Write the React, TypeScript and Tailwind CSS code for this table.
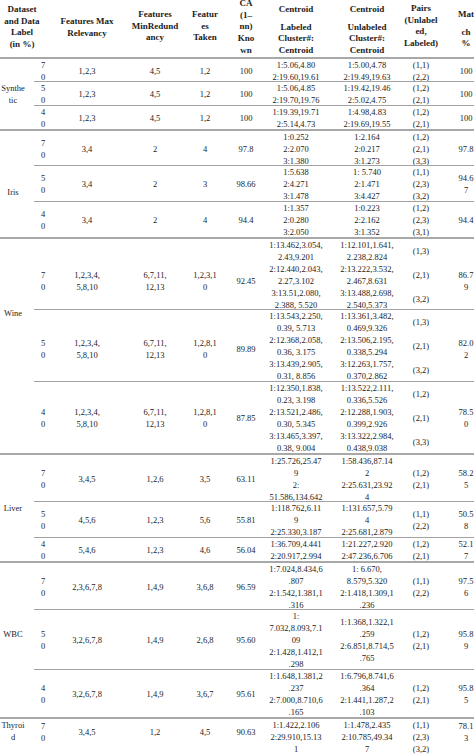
type Row = {
  label: string;
  fmr: string[];
  fmin: string[];
  taken: string[];
  ca: string[];
  cl: string[];
  cu: string[];
  pairs: string[];
  match: string[];
  lines: number;
  widePairs?: boolean;
  // nudges the short cells off the row's middle, as in the scan
  shift?: string;
};

type Group = {
  name: string[];
  nameClass: string;
  rows: Row[];
};

const rowHeight: Record<number, string> = {
  2: "h-[24px]",
  3: "h-[36px]",
  4: "h-[48px]",
  5: "h-[60px]",
  6: "h-[72px]",
};

const groups: Group[] = [
  {
    name: ["Synthe", "tic"],
    nameClass: "",
    rows: [
      {
        label: "70",
        fmr: ["1,2,3"],
        fmin: ["4,5"],
        taken: ["1,2"],
        ca: ["100"],
        cl: ["1:5.06,4.80", "2:19.60,19.61"],
        cu: ["1:5.00,4.78", "2:19.49,19.63"],
        pairs: ["(1,1)", "(2,2)"],
        match: ["100"],
        lines: 2,
      },
      {
        label: "50",
        fmr: ["1,2,3"],
        fmin: ["4,5"],
        taken: ["1,2"],
        ca: ["100"],
        cl: ["1:5.06,4.85", "2:19.70,19.76"],
        cu: ["1:19.42,19.46", "2:5.02,4.75"],
        pairs: ["(1,2)", "(2,1)"],
        match: ["100"],
        lines: 2,
      },
      {
        label: "40",
        fmr: ["1,2,3"],
        fmin: ["4,5"],
        taken: ["1,2"],
        ca: ["100"],
        cl: ["1:19.39,19.71", "2:5.14,4.73"],
        cu: ["1:4.98,4.83", "2:19.69,19.55"],
        pairs: ["(1,2)", "(2,1)"],
        match: ["100"],
        lines: 2,
      },
    ],
  },
  {
    name: ["Iris"],
    nameClass: "pt-[16px]",
    rows: [
      {
        label: "70",
        fmr: ["3,4"],
        fmin: ["2"],
        taken: ["4"],
        ca: ["97.8"],
        cl: ["1:0.252", "2:2.070", "3:1.380"],
        cu: ["1:2.164", "2:0.217", "3:1.273"],
        pairs: ["(1,2)", "(2,1)", "(3,3)"],
        match: ["97.8"],
        lines: 3,
      },
      {
        label: "50",
        fmr: ["3,4"],
        fmin: ["2"],
        taken: ["3"],
        ca: ["98.66"],
        cl: ["1:5.638", "2:4.271", "3:1.478"],
        cu: ["1: 5.740", "2:1.471", "3:4.427"],
        pairs: ["(1,1)", "(2,3)", "(3,2)"],
        match: ["94.6", "7"],
        lines: 3,
      },
      {
        label: "40",
        fmr: ["3,4"],
        fmin: ["2"],
        taken: ["4"],
        ca: ["94.4"],
        cl: ["1:1.357", "2:0.280", "3:2.050"],
        cu: ["1:0.223", "2:2.162", "3:1.352"],
        pairs: ["(1,2)", "(2,3)", "(3,1)"],
        match: ["94.4"],
        lines: 3,
      },
    ],
  },
  {
    name: ["Wine"],
    nameClass: "pb-[66px]",
    rows: [
      {
        label: "70",
        fmr: ["1,2,3,4,", "5,8,10"],
        fmin: ["6,7,11,", "12,13"],
        taken: ["1,2,3,1", "0"],
        ca: ["92.45"],
        cl: [
          "1:13.462,3.054,",
          "2.43,9.201",
          "2:12.440,2.043,",
          "2.27,3.102",
          "3:13.51,2.080,",
          "2.388, 5.520",
        ],
        cu: [
          "1:12.101,1.641,",
          "2.238,2.824",
          "2:13.222,3.532,",
          "2.467,8.631",
          "3:13.488,2.698,",
          "2.540,5.373",
        ],
        pairs: ["(1,3)", "(2,1)", "(3,2)"],
        match: ["86.7", "9"],
        lines: 6,
        widePairs: true,
        shift: "pt-[12px]",
      },
      {
        label: "50",
        fmr: ["1,2,3,4,", "5,8,10"],
        fmin: ["6,7,11,", "12,13"],
        taken: ["1,2,8,1", "0"],
        ca: ["89.89"],
        cl: [
          "1:13.543,2.250,",
          "0.39, 5.713",
          "2:12.368,2.058,",
          "0.36, 3.175",
          "3:13.439,2.905,",
          "0.31, 8.856",
        ],
        cu: [
          "1:13.361,3.482,",
          "0.469,9.326",
          "2:13.506,2.195,",
          "0.338,5.294",
          "3:12.263,1.757,",
          "0.370,2.862",
        ],
        pairs: ["(1,3)", "(2,1)", "(3,2)"],
        match: ["82.0", "2"],
        lines: 6,
        widePairs: true,
        shift: "pt-[6px]",
      },
      {
        label: "40",
        fmr: ["1,2,3,4,", "5,8,10"],
        fmin: ["6,7,11,", "12,13"],
        taken: ["1,2,8,1", "0"],
        ca: ["87.85"],
        cl: [
          "1:12.350,1.838,",
          "0.23, 3.198",
          "2:13.521,2.486,",
          "0.30, 5.345",
          "3:13.465,3.397,",
          "0.38, 9.004",
        ],
        cu: [
          "1:13.522,2.111,",
          "0.336,5.526",
          "2:12.288,1.903,",
          "0.399,2.926",
          "3:13.322,2.984,",
          "0.438,9.038",
        ],
        pairs: ["(1,2)", "(2,1)", "(3,3)"],
        match: ["78.5", "0"],
        lines: 6,
        widePairs: true,
      },
    ],
  },
  {
    name: ["Liver"],
    nameClass: "",
    rows: [
      {
        label: "70",
        fmr: ["3,4,5"],
        fmin: ["1,2,6"],
        taken: ["3,5"],
        ca: ["63.11"],
        cl: ["1:25.726,25.47", "9", "2:", "51.586,134.642"],
        cu: ["1:58.436,87.14", "2", "2:25.631,23.92", "4"],
        pairs: ["(1,2)", "(2,1)"],
        match: ["58.2", "5"],
        lines: 4,
      },
      {
        label: "50",
        fmr: ["4,5,6"],
        fmin: ["1,2,3"],
        taken: ["5,6"],
        ca: ["55.81"],
        cl: ["1:118.762,6.11", "9", "2:25.330,3.187"],
        cu: ["1:131.657,5.79", "4", "2:25.681,2.879"],
        pairs: ["(1,1)", "(2,2)"],
        match: ["50.5", "8"],
        lines: 3,
      },
      {
        label: "40",
        fmr: ["5,4,6"],
        fmin: ["1,2,3"],
        taken: ["4,6"],
        ca: ["56.04"],
        cl: ["1:36.709,4.441", "2:20.917,2.994"],
        cu: ["1:21.227,2.920", "2:47.236,6.706"],
        pairs: ["(1,2)", "(2,1)"],
        match: ["52.1", "7"],
        lines: 2,
      },
    ],
  },
  {
    name: ["WBC"],
    nameClass: "pb-[12px]",
    rows: [
      {
        label: "70",
        fmr: ["2,3,6,7,8"],
        fmin: ["1,4,9"],
        taken: ["3,6,8"],
        ca: ["96.59"],
        cl: ["1:7.024,8.434,6", ".807", "2:1.542,1.381,1", ".316"],
        cu: ["1: 6.670,", "8.579,5.320", "2:1.418,1.309,1", ".236"],
        pairs: ["(1,1)", "(2,2)"],
        match: ["97.5", "6"],
        lines: 4,
      },
      {
        label: "50",
        fmr: ["3,2,6,7,8"],
        fmin: ["1,4,9"],
        taken: ["2,6,8"],
        ca: ["95.60"],
        cl: ["1:", "7.032,8.093,7.1", "09", "2:1.428,1.412,1", ".298"],
        cu: ["1:1.368,1.322,1", ".259", "2:6.851,8.714,5", ".765"],
        pairs: ["(1,2)", "(2,1)"],
        match: ["95.8", "9"],
        lines: 5,
      },
      {
        label: "40",
        fmr: ["3,2,6,7,8"],
        fmin: ["1,4,9"],
        taken: ["3,6,7"],
        ca: ["95.61"],
        cl: ["1:1.648,1.381,2", ".237", "2:7.000,8.710,6", ".165"],
        cu: ["1:6.796,8.741,6", ".364", "2:1.441,1.287,2", ".103"],
        pairs: ["(1,2)", "(2,1)"],
        match: ["95.8", "5"],
        lines: 4,
      },
    ],
  },
  {
    name: ["Thyroi", "d"],
    nameClass: "pb-[12px]",
    rows: [
      {
        label: "70",
        fmr: ["3,4,5"],
        fmin: ["1,2"],
        taken: ["4,5"],
        ca: ["90.63"],
        cl: ["1:1.422,2.106", "2:29.910,15.13", "1"],
        cu: ["1:1.478,2.435", "2:10.785,49.34", "7"],
        pairs: ["(1,1)", "(2,3)", "(3,2)"],
        match: ["78.1", "3"],
        lines: 3,
        shift: "pb-[10px]",
      },
    ],
  },
];

function Cell({ lines, className = "" }: { lines: string[]; className?: string }) {
  return (
    <div className={`flex min-w-0 flex-col items-center justify-center ${className}`}>
      {lines.map((text, i) => (
        <span key={i} className="whitespace-nowrap">
          {text}
        </span>
      ))}
    </div>
  );
}

function HeadCell({ lines, className = "" }: { lines: string[]; className?: string }) {
  return (
    <div className={`flex min-w-0 flex-col items-center ${className}`}>
      {lines.map((text, i) => (
        <span key={i} className="whitespace-nowrap">
          {text}
        </span>
      ))}
    </div>
  );
}

function Header() {
  return (
    <div className="grid h-[60px] grid-cols-[60px_70px_66px_34px_48px_52px_90px_18px_72px] text-[9px] font-bold leading-[11.7px]">
      <HeadCell className="pt-[7px]" lines={["Dataset", "and Data", "Label", "(in %)"]} />
      <HeadCell className="pt-[19px]" lines={["Features Max", "Relevancy"]} />
      <HeadCell className="pt-[12px]" lines={["Features", "MinRedund", "ancy"]} />
      <HeadCell className="pt-[12px]" lines={["Featur", "es", "Taken"]} />
      <HeadCell className="pt-[1px]" lines={["CA", "(1–", "nn)", "Kno", "wn"]} />
      <div className="flex min-w-0 flex-col items-center pt-[7px]">
        <span className="whitespace-nowrap">Centroid</span>
        <span className="mt-[6px] whitespace-nowrap">Labeled</span>
        <span className="whitespace-nowrap">Cluster#:</span>
        <span className="whitespace-nowrap">Centroid</span>
      </div>
      <div className="flex min-w-0 flex-col items-center pt-[7px]">
        <span className="whitespace-nowrap">Centroid</span>
        <span className="mt-[6px] whitespace-nowrap">Unlabeled</span>
        <span className="whitespace-nowrap">Cluster#:</span>
        <span className="whitespace-nowrap">Centroid</span>
      </div>
      <HeadCell className="pt-[6px]" lines={["Pairs", "(Unlabel", "ed,", "Labeled)"]} />
      <div className="flex min-w-0 flex-col items-center pt-[12px]">
        <span className="whitespace-nowrap">Mat</span>
        <span className="mt-[6px] whitespace-nowrap">ch</span>
        <span className="whitespace-nowrap">%</span>
      </div>
    </div>
  );
}

function DataRow({ row, first }: { row: Row; first: boolean }) {
  const shift = row.shift ?? "";
  return (
    <div
      className={`grid shrink-0 grid-cols-[18px_70px_66px_34px_48px_52px_90px_18px_72px] ${rowHeight[row.lines]} ${
        first ? "border-t-2 border-[#a8a8a8]" : "border-t border-[#a3a3a3]"
      }`}
    >
      <Cell lines={row.label.split("")} className={shift} />
      <Cell lines={row.fmr} className={shift} />
      <Cell lines={row.fmin} className={shift} />
      <Cell lines={row.taken} className={shift} />
      <Cell lines={row.ca} className={shift} />
      <Cell lines={row.cl} />
      <Cell lines={row.cu} />
      <Cell lines={row.pairs} className={row.widePairs ? "leading-[24px]" : ""} />
      <Cell lines={row.match} className={shift} />
    </div>
  );
}

export default function App() {
  return (
    <div className="h-[754px] w-[474px] overflow-hidden bg-white font-['Liberation_Serif','Times_New_Roman',serif] text-[#1c1c1c]">
      <div className="-ml-[8px] -mt-[3px] w-[510px]">
        <Header />
        <div className="text-[8.5px] leading-[12px]">
          {groups.map((group) => (
            <div key={group.name.join("")} className="flex">
              <div
                className={`flex w-[42px] shrink-0 flex-col items-center justify-center border-t-2 border-[#a8a8a8] ${group.nameClass}`}
              >
                {group.name.map((part) => (
                  <span key={part} className="whitespace-nowrap">
                    {part}
                  </span>
                ))}
              </div>
              <div className="flex min-w-0 flex-1 flex-col">
                {group.rows.map((row, i) => (
                  <DataRow key={row.label + i} row={row} first={i === 0} />
                ))}
              </div>
            </div>
          ))}
        </div>
      </div>
    </div>
  );
}
